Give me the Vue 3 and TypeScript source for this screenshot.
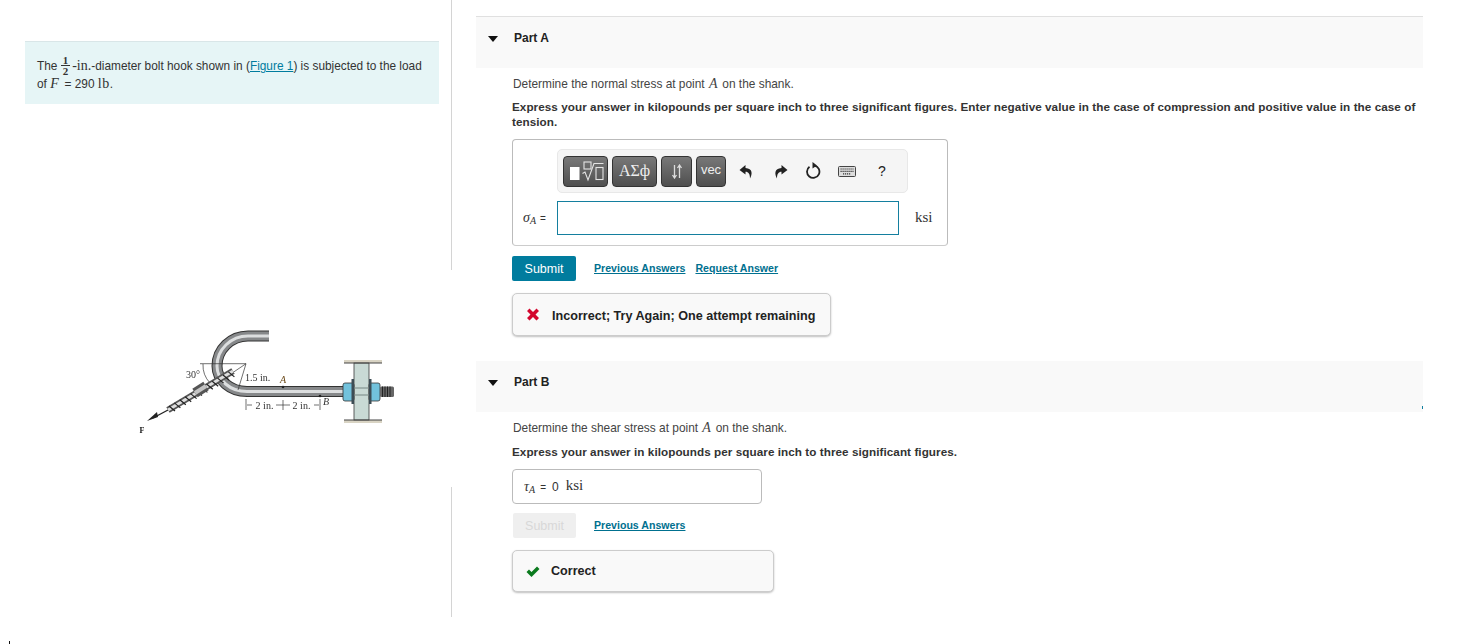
<script setup lang="ts">
const strands: number[] = [0, 1, 2, 3, 4, 5, 6, 7, 8, 9, 10, 11];
function strandPath(i: number): string {
  const x = 50 + i * 5.4;
  const y = 89 - i * 3.1;
  return `M${x - 1} ${y - 3}L${x + 5} ${y + 2}`;
}
</script>

<template>
  <div class="page">
    <span class="speck teal"></span>
    <span class="speck black"></span>
    <aside class="left">
      <div class="intro">
        The
        <span class="frac"><span class="num">1</span><span class="den">2</span></span><span class="m tight-m">-in.</span>-diameter bolt hook shown in (<a class="fig">Figure 1</a>) is subjected to the load of
        <i class="m mf">F</i> = 290 <span class="m">lb</span>.
      </div>
      <svg class="figure" width="290" height="120" viewBox="0 0 290 120">
        <g class="wall">
          <rect x="224" y="40" width="38" height="3" fill="#d9d4c4" />
          <rect x="224" y="100" width="38" height="3" fill="#d9d4c4" />
          <rect x="234" y="43" width="15" height="57" fill="#c9dad5" stroke="#3a3a3a" stroke-width="0.8" />
          <path d="M224 43H262M224 100H262" stroke="#444" stroke-width="1" />
          <path d="M234 68H249M234 75H249" stroke="#9fb0ac" stroke-width="2" />
        </g>
        <g fill="none" stroke-linecap="butt">
          <path d="M149 16H128A31 30 0 0 0 97 46C97 60 110 71.500 127 71.500H224" stroke="#333" stroke-width="11" />
          <path d="M149 16H128A31 30 0 0 0 97 46C97 60 110 71.500 127 71.500H224" stroke="#86888a" stroke-width="9" />
          <path d="M149 16H128A31 30 0 0 0 97 46C97 60 110 71.500 127 71.500H224" stroke="#dcdedf" stroke-width="3" />
        </g>
        <g>
          <rect x="223" y="63" width="11" height="18" rx="2" fill="#72c2dc" stroke="#333" stroke-width="0.8" />
          <rect x="249" y="63" width="11" height="18" rx="2" fill="#72c2dc" stroke="#333" stroke-width="0.8" />
          <rect x="231.500" y="59" width="2.500" height="25" fill="#3d4d55" />
          <rect x="249" y="59" width="2.500" height="25" fill="#3d4d55" />
          <rect x="260" y="66.500" width="14" height="10.500" rx="1.500" fill="#666" />
          <path d="M262.500 66.500V77M265 66.500V77M267.500 66.500V77M270 66.500V77" stroke="#222" stroke-width="1" />
        </g>
        <g stroke="#333" fill="none" stroke-width="0.7">
          <path d="M80 43.700H126L118 70M126 43.700L90 68M83 44A26 26 0 0 0 90 63" />
          <path d="M126 79V90M163 80V90M200 79V90M127 85H132M156 85H170M194 85H199" />
        </g>
        <circle cx="163" cy="67" r="1.300" fill="#222" />
        <circle cx="200" cy="76" r="1.300" fill="#222" />
        <g fill="none">
          <path d="M48 90L113 51" stroke="#555" stroke-width="6.500" />
          <path d="M48 90L113 51" stroke="#dedede" stroke-width="3" />
          <path v-for="i in strands" :key="i" :d="strandPath(i)" stroke="#222" stroke-width="1.200" />
          <path d="M75 73L86 66" stroke="#555" stroke-width="10" />
          <path d="M75 73L86 66" stroke="#c4c4c4" stroke-width="4" />
          <path d="M48 90L33 98" stroke="#222" stroke-width="1.300" />
        </g>
        <path d="M27 101L37 92L38 97Z" fill="#222" />
        <text x="73" y="58" class="lbl" text-anchor="middle">30°</text>
        <text x="125" y="61" class="lbl">1.5 in.</text>
        <text x="163" y="63" class="lbl it brown" text-anchor="middle">A</text>
        <text x="144.500" y="89" class="lbl" text-anchor="middle">2 in.</text>
        <text x="181.500" y="89" class="lbl" text-anchor="middle">2 in.</text>
        <text x="203" y="85" class="lbl it">B</text>
        <text x="22" y="113" class="lbl bold" text-anchor="middle">F</text>
      </svg>
    </aside>

    <div class="divider"><span class="seg one"></span><span class="seg two"></span></div>

    <main class="right">
      <section class="part">
        <header class="part-head">
          <svg class="caret" width="10" height="6" viewBox="0 0 10 6"><path d="M0 0H10L5 6Z" fill="#111" /></svg>
          <span>Part A</span>
        </header>
        <div class="body">
          <p class="q">Determine the normal stress at point <i class="m mv">A</i> on the shank.</p>
          <p class="ins">Express your answer in kilopounds per square inch to three significant figures. Enter negative value in the case of compression and positive value in the case of tension.</p>
          <div class="answer">
            <div class="toolbar">
              <button class="tb b1" aria-label="templates">
                <svg width="37" height="25" viewBox="0 0 37 25" fill="none" stroke="#e4e4e4" stroke-width="1.100">
                  <rect x="3" y="8" width="9.500" height="13" fill="#fff" stroke="none" />
                  <rect x="17" y="3" width="7" height="7" />
                  <path d="M15.500 14.500l2.500 -1.500 3 8 6 -16.500h9.500" />
                  <rect x="29" y="8.500" width="7" height="12" />
                </svg>
              </button>
              <button class="tb b2">ΑΣф</button>
              <button class="tb b3" aria-label="arrows">
                <svg width="12" height="15" viewBox="0 0 12 15" fill="none" stroke="#dcdcdc" stroke-width="1.300">
                  <path d="M3.500 1V14M1.500 11L3.500 14L5.500 11" />
                  <path d="M8.500 14V1M6.500 4L8.500 1L10.500 4" />
                </svg>
              </button>
              <button class="tb b4">vec</button>
              <svg class="ic u" width="14" height="15" viewBox="0 0 14 15"><path d="M6.500 1L0.500 6L6.500 10.500V7.800C9.500 7.800 11 10 11 14.500C13.500 10 13.800 4.500 6.500 4Z" fill="#222" /></svg>
              <svg class="ic r" width="14" height="15" viewBox="0 0 14 15"><path d="M7.500 1L13.500 6L7.500 10.500V7.800C4.500 7.800 3 10 3 14.500C0.500 10 0.200 4.500 7.500 4Z" fill="#222" /></svg>
              <svg class="ic c" width="16" height="18" viewBox="0 0 16 18" fill="none">
                <path d="M9.500 3.600A6.200 6.200 0 1 1 4.500 4.700" stroke="#222" stroke-width="1.800" />
                <path d="M7.500 0L12 3.500L7.500 6.500Z" fill="#222" />
              </svg>
              <svg class="ic k" width="18" height="11" viewBox="0 0 18 11">
                <rect x="0.500" y="0.500" width="17" height="10" rx="1" fill="#ddd" stroke="#444" />
                <path d="M2.500 3H15.500M2.500 5.300H15.500M5 7.800H13" stroke="#333" stroke-dasharray="1.200 0.800" stroke-width="1.200" />
              </svg>
              <span class="help">?</span>
            </div>
            <div class="row">
              <span class="sym"><i>σ</i><sub>A</sub><span class="eq">=</span></span>
              <div class="field"></div>
              <span class="unit">ksi</span>
            </div>
          </div>
          <div class="actions">
            <button class="submit">Submit</button>
            <a class="link">Previous Answers</a>
            <a class="link">Request Answer</a>
          </div>
          <div class="fb wrong">
            <svg width="14" height="13" viewBox="0 0 14 13"><path d="M1 3L3.500 0.500L7 4L10.500 0.500L13 3L9.500 6.500L13 10L10.500 12.500L7 9L3.500 12.500L1 10L4.500 6.500Z" fill="#d3062e" /></svg>
            <span class="fb-text">Incorrect; Try Again; One attempt remaining</span>
          </div>
        </div>
      </section>

      <section class="part second">
        <header class="part-head plain">
          <svg class="caret" width="10" height="6" viewBox="0 0 10 6"><path d="M0 0H10L5 6Z" fill="#111" /></svg>
          <span>Part B</span>
        </header>
        <div class="body">
          <p class="q">Determine the shear stress at point <i class="m mv">A</i> on the shank.</p>
          <p class="ins one">Express your answer in kilopounds per square inch to three significant figures.</p>
          <div class="done">
            <span class="sym"><i>τ</i><sub>A</sub><span class="eq">=</span></span>
            <span class="zero">0</span>
            <span class="unit">ksi</span>
          </div>
          <div class="actions tight">
            <button class="submit off">Submit</button>
            <a class="link">Previous Answers</a>
          </div>
          <div class="fb right-fb">
            <svg width="14" height="11" viewBox="0 0 14 11"><path d="M0.500 6L3 3.500L5.500 6L11 0.500L13.500 3L5.500 11Z" fill="#0b7a1e" /></svg>
            <span>Correct</span>
          </div>
        </div>
      </section>
    </main>
  </div>
</template>

<style>
html, body { margin: 0; background: #fff; }
</style>

<style scoped>
.page {
  position: relative;
  display: flex;
  width: 1463px;
  height: 644px;
  overflow: hidden;
  background: #fff;
  font-family: "Liberation Sans", Arial, sans-serif;
  font-size: 12px;
  color: #333;
}
.speck { position: absolute; width: 1px; height: 3px; }
.speck.teal { left: 1422px; top: 406px; background: #14809f; }
.speck.black { left: 9px; top: 641px; background: #111; }
.left { width: 451px; padding: 41px 12px 0 25px; box-sizing: border-box; }
.intro {
  box-sizing: border-box;
  height: 63px;
  padding: 15px 12px 0;
  background: #e6f5f6;
  border-top: 1px solid #d9e6e8;
  line-height: 18px;
  font-size: 11.850px;
}
.m { font-family: "Liberation Serif", "Times New Roman", serif; font-size: 14px; letter-spacing: 0.500px; }
.tight-m { letter-spacing: 0; font-weight: 500; }
.mf { margin-right: 2px; }
.mv { font-weight: 500; margin: 0 1px; }
.frac {
  display: inline-flex;
  flex-direction: column;
  align-items: center;
  vertical-align: middle;
  margin: -9px 2px -7px 0;
  font-family: "Liberation Serif", serif;
  font-size: 11px;
  line-height: 10px;
  font-weight: 700;
}
.num { border-bottom: 1px solid #333; padding: 0 2px; line-height: 10px; }
.den { line-height: 10px; }
.fig { color: #007c9e; text-decoration: underline; }
.figure { display: block; margin: 216px 0 0 95px; filter: blur(0.45px); }
.lbl { font-family: "Liberation Serif", serif; font-size: 10px; fill: #333; }
.brown { fill: #6b4a1a; }
.it { font-style: italic; }
.bold { font-weight: 700; font-size: 8px; fill: #111; }

.divider { width: 1px; display: flex; flex-direction: column; flex: none; }
.seg { display: block; width: 1px; background: #d4d4d4; }
.seg.one { height: 270px; }
.seg.two { height: 130px; margin-top: 217px; }

.right { margin-left: 24px; width: 947px; padding-top: 16px; flex: none; }
.part-head {
  display: flex;
  align-items: flex-start;
  height: 52px;
  padding: 14px 0 0 12px;
  box-sizing: border-box;
  background: #f9f9f9;
  border-top: 1px solid #e0e0e0;
  font-weight: 700;
  color: #222;
}
.part-head.plain { border-top: 0; height: 51px; }
.caret { margin: 5px 16px 0 0; }
.second { margin-top: 25px; }
.body { padding-left: 36px; }
.q { margin: 9px 0 0 1px; line-height: 13px; color: #444; font-size: 11.900px; }
.ins { margin: 8px 0 0 0; font-weight: 700; line-height: 15px; color: #333; font-size: 11.700px; letter-spacing: 0.060px; }
.ins.one { margin-top: 9px; }
.answer {
  box-sizing: border-box;
  width: 436px;
  height: 107px;
  margin-top: 10px;
  padding: 9px 0 0 44px;
  border: 1px solid #bbb;
  border-bottom-color: #ccc;
  border-radius: 4px;
}
.toolbar {
  box-sizing: border-box;
  display: flex;
  align-items: center;
  width: 351px;
  height: 44px;
  padding-left: 5px;
  background: #f5f5f5;
  border: 1px solid #e8e8e8;
  border-radius: 5px;
}
.tb {
  box-sizing: border-box;
  display: flex;
  align-items: center;
  justify-content: center;
  height: 31px;
  padding: 0;
  margin-right: 4px;
  border: 1px solid #333;
  border-radius: 4px;
  background: linear-gradient(#787878, #4f4f4f);
  color: #eee;
}
.b1 { width: 45px; }
.b2 { width: 45px; font-family: "Liberation Serif", serif; font-size: 16px; }
.b3 { width: 31px; }
.b4 { width: 30px; margin-right: 0; font-family: "Liberation Sans", sans-serif; font-size: 13px; padding-bottom: 3px; }
.ic { flex: none; display: block; }
.u { margin-left: 13px; }
.r { margin-left: 21px; }
.c { margin-left: 17px; }
.k { margin-left: 17px; }
.help { margin-left: 22px; font-size: 14px; color: #222; }
.row { display: flex; align-items: center; margin: 8px 0 0 -35px; }
.sym { font-family: "Liberation Serif", serif; font-size: 14px; display: inline-flex; align-items: baseline; width: 35px; padding-left: 1px; box-sizing: border-box; color: #333; }
.sym sub { font-size: 10px; font-style: italic; line-height: 0; position: relative; top: 2px; vertical-align: baseline; margin-right: 4px; }
.eq { font-family: "Liberation Sans", sans-serif; font-size: 10px; }
.field {
  box-sizing: border-box;
  width: 342px;
  height: 34px;
  border: 1px solid #147f9f;
  background: #fff;
}
.unit { font-family: "Liberation Serif", serif; font-size: 15px; margin-left: 16px; padding-bottom: 2px; color: #333; }
.actions { display: flex; align-items: center; margin-top: 10px; }
.actions.tight { margin-top: 9px; margin-left: 1px; }
.submit {
  box-sizing: border-box;
  width: 64px;
  height: 25px;
  padding: 0;
  border: 0;
  border-radius: 2px;
  background: #007c9e;
  color: #fff;
  font: 12.500px "Liberation Sans", sans-serif;
  margin-right: 18px;
}
.submit.off { width: 63px; background: #efefef; color: #d8d8d8; }
.link { color: #00708f; font-weight: 700; font-size: 10.600px; text-decoration: underline; margin-right: 10px; padding-bottom: 2px; }
.fb {
  box-sizing: border-box;
  display: flex;
  align-items: center;
  width: 319px;
  height: 43px;
  margin-top: 12px;
  padding-left: 13px;
  gap: 12px;
  background: #f9f9f9;
  border: 1px solid #ccc;
  border-radius: 5px;
  box-shadow: 0 1px 2px rgba(0, 0, 0, 0.25);
  font-weight: 700;
  color: #222;
  font-size: 12.600px;
}
.fb-text { padding-top: 2px; }
.right-fb { width: 262px; height: 42px; gap: 11px; }
.done {
  box-sizing: border-box;
  display: flex;
  align-items: center;
  width: 250px;
  height: 35px;
  margin-top: 10px;
  padding-left: 10px;
  border: 1px solid #bbb;
  border-radius: 4px;
}
.done .sym { width: auto; }
.done .eq { margin-left: 1px; }
.zero { font-family: "Liberation Sans", sans-serif; font-size: 12px; margin-left: 6px; }
.done .unit { margin-left: 7px; }
</style>
